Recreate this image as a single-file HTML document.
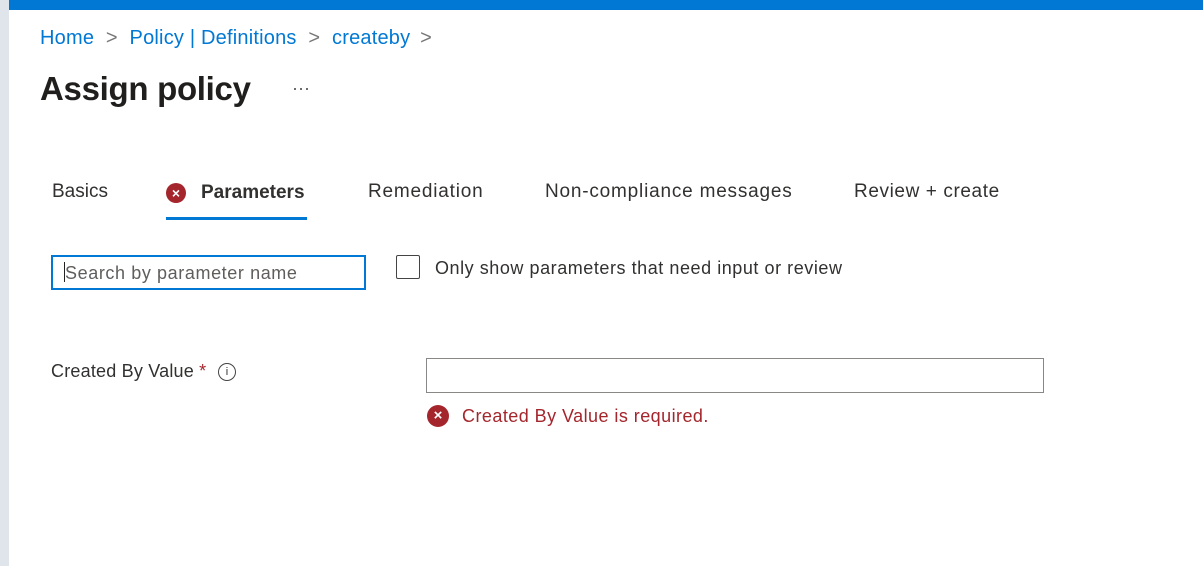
<!DOCTYPE html>
<html><head><meta charset="utf-8"><style>
body{margin:0;width:1203px;height:566px;background:#fff;position:relative;overflow:hidden;font-family:"Liberation Sans",sans-serif;color:#323130}
.a{position:absolute;white-space:nowrap}
</style></head><body>
<div class="a" style="left:0;top:0;width:9px;height:566px;background:#dfe5ea"></div>
<div class="a" style="left:9px;top:0;width:1194px;height:10px;background:#0078d4"></div>
<div class="a" style="left:40px;top:27px;font-size:20px;color:#0078d4;letter-spacing:0.2px">Home <span style="color:#777;margin:0 6px">&gt;</span> Policy | Definitions <span style="color:#777;margin:0 6px">&gt;</span> createby <span style="color:#777;margin-left:4px">&gt;</span></div>
<div class="a" style="left:40px;top:70px;font-size:33px;font-weight:bold;color:#201f1e;letter-spacing:-0.3px">Assign policy</div>
<div class="a" style="left:292px;top:78px;font-size:18px;color:#555">···</div>
<div class="a" style="left:52px;top:181px;font-size:19px">Basics</div>
<div class="a" style="left:166px;top:183px;width:20px;height:20px;border-radius:50%;background:#a4262c;color:#fff;font-size:14px;line-height:20px;text-align:center;font-weight:bold">×</div>
<div class="a" style="left:201px;top:182px;font-size:19px;font-weight:bold">Parameters</div>
<div class="a" style="left:166px;top:217px;width:141px;height:3px;background:#0078d4"></div>
<div class="a" style="left:368px;top:181px;font-size:19px;letter-spacing:0.8px">Remediation</div>
<div class="a" style="left:545px;top:181px;font-size:19px;letter-spacing:0.8px">Non-compliance messages</div>
<div class="a" style="left:854px;top:181px;font-size:19px;letter-spacing:0.6px">Review + create</div>
<div class="a" style="left:51px;top:255px;width:311px;height:31px;border:2px solid #0078d4"></div>
<div class="a" style="left:65px;top:263px;font-size:18px;color:#605e5c;letter-spacing:0.6px">Search by parameter name</div>
<div class="a" style="left:64px;top:262px;width:1px;height:20px;background:#222"></div>
<div class="a" style="left:396px;top:255px;width:24px;height:24px;border:1.5px solid #444;border-radius:2px;box-sizing:border-box"></div>
<div class="a" style="left:435px;top:258px;font-size:18px;letter-spacing:0.55px">Only show parameters that need input or review</div>
<div class="a" style="left:51px;top:361px;font-size:18px;letter-spacing:0.2px">Created By Value <span style="color:#a4262c">*</span></div>
<div class="a" style="left:218px;top:363px;width:16px;height:16px;border:1.3px solid #444;border-radius:50%;font-size:11px;text-align:center;line-height:16px">i</div>
<div class="a" style="left:426px;top:358px;width:616px;height:33px;border:1px solid #8a8886"></div>
<div class="a" style="left:427px;top:405px;width:22px;height:22px;border-radius:50%;background:#a4262c;color:#fff;font-size:15px;line-height:22px;text-align:center;font-weight:bold">×</div>
<div class="a" style="left:462px;top:406px;font-size:18px;color:#a4262c;letter-spacing:0.45px">Created By Value is required.</div>
</body></html>
